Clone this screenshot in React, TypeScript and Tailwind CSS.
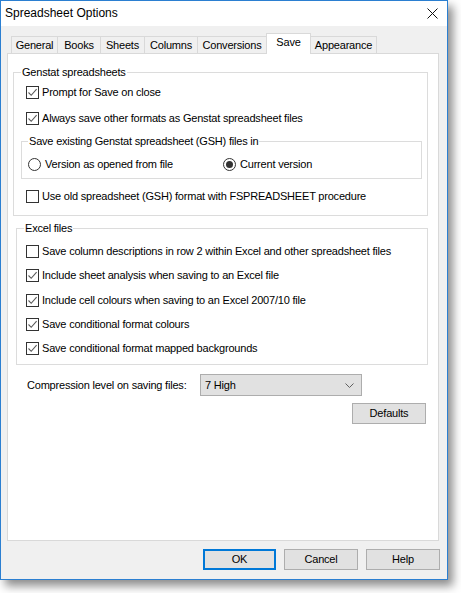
import React from 'react'

const tabs = [
  { label: 'General', w: 'w-[46px]' },
  { label: 'Books', w: 'w-[43px]' },
  { label: 'Sheets', w: 'w-[44px]' },
  { label: 'Columns', w: 'w-[53px]' },
  { label: 'Conversions', w: 'w-[69px]' },
  { label: 'Save', w: 'w-[45px]', active: true },
  { label: 'Appearance', w: 'w-[66px]' },
]

function CheckBox({ checked }: { checked?: boolean }) {
  return (
    <span className="flex h-[13px] w-[13px] shrink-0 items-center justify-center border border-[#333333] bg-white">
      {checked && (
        <svg width="11" height="11" viewBox="0 0 11 11">
          <path d="M1.5 5.5 L4.2 8.3 L9.6 2.2" fill="none" stroke="#5a5a5a" strokeWidth="1.1" />
        </svg>
      )}
    </span>
  )
}

function CheckRow({ label, checked, className = '' }: { label: string; checked?: boolean; className?: string }) {
  return (
    <div className={`flex h-[20px] items-center gap-[3px] ${className}`}>
      <CheckBox checked={checked} />
      <span>{label}</span>
    </div>
  )
}

function Radio({ label, selected }: { label: string; selected?: boolean }) {
  return (
    <div className="flex items-center gap-[4px]">
      <span className="flex h-[13px] w-[13px] items-center justify-center rounded-full border border-[#333333] bg-white">
        {selected && <span className="h-[7px] w-[7px] rounded-full bg-[#333333]" />}
      </span>
      <span>{label}</span>
    </div>
  )
}

function Button({ children, primary, className = '' }: { children: React.ReactNode; primary?: boolean; className?: string }) {
  return (
    <button
      className={`flex h-[21px] items-center justify-center bg-[#e1e1e1] ${
        primary ? 'border-2 border-[#0078d7]' : 'border border-[#adadad]'
      } ${className}`}
    >
      {children}
    </button>
  )
}

export default function App() {
  return (
    <div className="h-[593px] w-[461px] bg-white font-['Liberation_Sans',Arial,sans-serif] text-[11px] leading-[15px] tracking-[-0.2px] text-black">
      <div className="flex h-[580px] w-[448px] flex-col border border-[#2b7fd1] bg-[#f0f0f0] shadow-[5px_6px_9px_rgba(0,0,0,0.45)]">
        {/* Title bar */}
        <div className="flex h-[25px] shrink-0 items-center justify-between bg-white pl-[4px] pr-[9px]">
          <span className="text-[12px] tracking-normal">Spreadsheet Options</span>
          <svg width="11" height="11" viewBox="0 0 11 11">
            <path d="M0.5 0.5 L10.5 10.5 M10.5 0.5 L0.5 10.5" stroke="#111" strokeWidth="1" />
          </svg>
        </div>

        {/* Tabs */}
        <div className="ml-[10px] mt-[7px] flex h-[20px] items-end">
          {tabs.map((t, i) => (
            <div
              key={t.label}
              className={`flex items-center justify-center border-[#d9d9d9] ${t.w} ${
                t.active
                  ? 'relative z-10 -mb-px h-[21px] border-x border-t bg-white pb-[3px]'
                  : `h-[17px] border-t bg-[#f0f0f0] ${i === 0 ? 'border-l' : ''} ${
                      i === tabs.length - 1 ? 'border-r' : 'border-l'
                    }`
              }`}
            >
              {t.label}
            </div>
          ))}
        </div>

        {/* Tab panel */}
        <div className="ml-[6px] flex h-[488px] w-[432px] flex-col border border-[#d9d9d9] bg-white">
          <fieldset className="ml-[5px] mt-[11px] w-[415px] border border-[#dcdcdc] pb-[9px] pl-[7px]">
            <legend className="px-[1px]">Genstat spreadsheets</legend>
            <CheckRow label="Prompt for Save on close" checked className="ml-[5px] mt-[2px]" />
            <CheckRow label="Always save other formats as Genstat spreadsheet files" checked className="ml-[5px] mt-[6px]" />
            <fieldset className="mt-[6px] w-[401px] border border-[#dcdcdc] pb-[4px] pl-[6px]">
              <legend className="px-[1px]">Save existing Genstat spreadsheet (GSH) files in</legend>
              <div className="mt-[5px] flex h-[20px] items-center">
                <div className="w-[195px]">
                  <Radio label="Version as opened from file" />
                </div>
                <Radio label="Current version" selected />
              </div>
            </fieldset>
            <CheckRow label="Use old spreadsheet (GSH) format with FSPREADSHEET procedure" className="ml-[5px] mt-[7px]" />
          </fieldset>

          <fieldset className="ml-[8px] mt-[5px] w-[412px] border border-[#dcdcdc] pb-[6px] pl-[7px]">
            <legend className="px-[1px]">Excel files</legend>
            <CheckRow label="Save column descriptions in row 2 within Excel and other spreadsheet files" className="ml-[2px] mt-[5px]" />
            <CheckRow label="Include sheet analysis when saving to an Excel file" checked className="ml-[2px] mt-[4px]" />
            <CheckRow label="Include cell colours when saving to an Excel 2007/10 file" checked className="ml-[2px] mt-[5px]" />
            <CheckRow label="Save conditional format colours" checked className="ml-[2px] mt-[4px]" />
            <CheckRow label="Save conditional format mapped backgrounds" checked className="ml-[2px] mt-[4px]" />
          </fieldset>

          <div className="ml-[19px] mt-[9px] flex items-center">
            <span className="w-[173px]">Compression level on saving files:</span>
            <div className="flex h-[22px] w-[162px] items-center justify-between border border-[#adadad] bg-[#e1e1e1] pl-[4px] pr-[7px]">
              <span>7 High</span>
              <svg width="9" height="5" viewBox="0 0 9 5">
                <path d="M0.5 0.5 L4.5 4.5 L8.5 0.5" fill="none" stroke="#606060" strokeWidth="1" />
              </svg>
            </div>
          </div>

          <div className="mr-[12px] mt-[7px] flex justify-end">
            <Button className="w-[74px]">Defaults</Button>
          </div>
        </div>

        {/* Dialog buttons */}
        <div className="mr-[7px] mt-[8px] flex justify-end gap-[8px]">
          <Button primary className="w-[73px]">OK</Button>
          <Button className="w-[74px]">Cancel</Button>
          <Button className="w-[74px]">Help</Button>
        </div>
      </div>
    </div>
  )
}
